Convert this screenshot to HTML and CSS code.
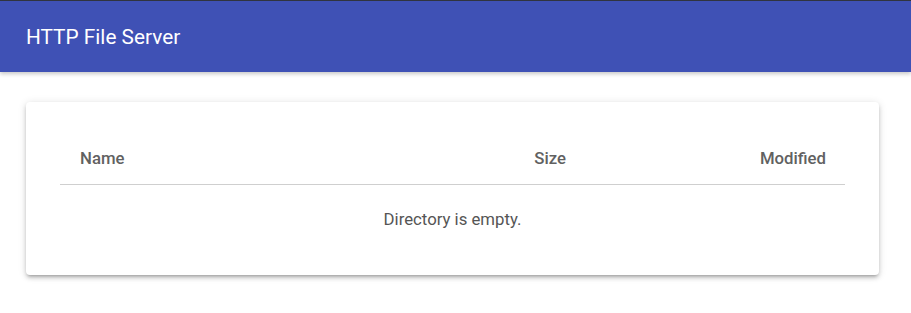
FILE: index.html
```html
<!DOCTYPE html>
<html lang="en">
<head>
<meta charset="utf-8">
<title>HTTP File Server</title>
<link rel="stylesheet" href="styles.css">
</head>
<body>
<header class="appbar">
  <h1 class="appbar-title">HTTP File Server</h1>
</header>
<main class="content">
  <section class="card">
    <table class="files">
      <thead>
        <tr>
          <th class="col-name">Name</th>
          <th class="col-size">Size</th>
          <th class="col-mod">Modified</th>
        </tr>
      </thead>
      <tbody>
        <tr>
          <td class="empty" colspan="3">Directory is empty.</td>
        </tr>
      </tbody>
    </table>
  </section>
</main>
</body>
</html>
```
FILE: styles.css
```css
* { box-sizing: border-box; }
html, body { margin: 0; padding: 0; background: #fff; }
body { font-family: Roboto, "Liberation Sans", sans-serif; color: #555; }

.appbar {
  height: 72px;
  background: #3f51b5;
  border-top: 1px solid #30343f;
  display: flex;
  align-items: center;
  padding: 0 26px;
  box-shadow: 0 2px 4px rgba(0,0,0,0.22);
  position: relative;
  z-index: 1;
}
.appbar-title {
  margin: 0;
  font-size: 20.8px;
  font-weight: 400;
  color: #fff;
  line-height: 24px;
}

.content { padding: 30px 32px 38px 26px; }

.card {
  width: 853px;
  height: 173px;
  background: #fff;
  border-radius: 4px;
  box-shadow: 0 3px 3px -2px rgba(0,0,0,0.22), 0 3px 4px 0 rgba(0,0,0,0.16), 0 1px 8px 0 rgba(0,0,0,0.12);
  padding: 34px 34px 0;
}

.files { width: 100%; border-collapse: collapse; }
.files th {
  font-size: 16.75px;
  font-weight: 500;
  color: #616161;
  height: 48px;
  padding: 0 19px 4px 20px;
  border-bottom: 1px solid #cfcfcf;
  vertical-align: middle;
  line-height: 24px;
}
.files .col-name { text-align: left; }
.files .col-size { text-align: right; width: 240px; }
.files .col-mod { text-align: right; width: 260px; }
.files td.empty {
  text-align: center;
  font-size: 16.75px;
  line-height: 24px;
  padding: 22px 0;
  color: #555;
}
```
